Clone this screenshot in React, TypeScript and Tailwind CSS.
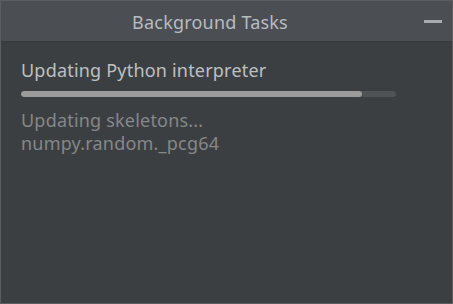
export default function App() {
  return (
    <div
      className="flex h-[304px] w-[453px] flex-col border border-[#5b5d5f] bg-[#3c3f41]"
      style={{ fontFamily: '"Noto Sans", "Liberation Sans", sans-serif' }}
    >
      <div className="flex h-[41px] shrink-0 items-center border-b border-[#35383a] bg-[#4b4e52] pr-[9px]">
        <div className="flex-1 pt-[2px] text-center text-[18px] tracking-[0.2px] text-[#b7bcc2]">Background Tasks</div>
        <button className="ml-[4px] flex h-[20px] w-[20px] items-center justify-center">
          <span className="block h-[3px] w-[18px] bg-[#a9abae]" />
        </button>
      </div>
      <div className="flex flex-col px-[20px] pt-[16px]">
        <div className="text-[18px] leading-[24px] tracking-[0.2px] text-[#bcc0c4]">Updating Python interpreter</div>
        <div className="mt-[9px] h-[6px] w-[375px] overflow-hidden rounded-full bg-[#505355]">
          <div className="h-full w-[341px] rounded-full bg-[#9b9b9b]" />
        </div>
        <div className="mt-[12px] text-[18px] leading-[23px] tracking-[0.2px] text-[#858789]">Updating skeletons...</div>
        <div className="text-[18px] leading-[23px] tracking-[0.2px] text-[#858789]">numpy.random._pcg64</div>
      </div>
    </div>
  );
}
